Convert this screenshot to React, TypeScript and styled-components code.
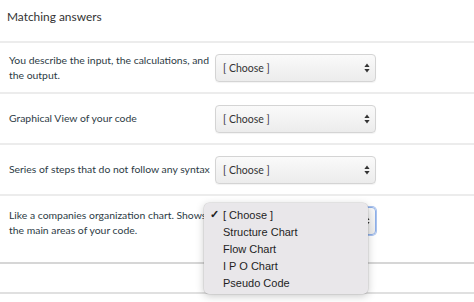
import React from "react";
import styled, { createGlobalStyle } from "styled-components";

const Global = createGlobalStyle`
  html, body { margin: 0; padding: 0; background: #fff; }
  body { font-family: Lato, "Open Sans", sans-serif; color: #2d3b45; }
`;

const Page = styled.div`
  width: 474px;
  height: 302px;
  overflow: hidden;
  position: relative;
`;

const Title = styled.div`
  height: 43px;
  padding-left: 7px;
  padding-top: 9px;
  box-sizing: border-box;
  font-size: 11.9px;
  color: #333;
  border-bottom: 2px solid #ececec;
`;

const Row = styled.div<{ $h: number; $top?: boolean; $last?: boolean }>`
  height: ${(p) => p.$h}px;
  box-sizing: border-box;
  display: flex;
  align-items: ${(p) => (p.$top ? "flex-start" : "center")};
  padding-top: ${(p) => (p.$top ? "11px" : "0")};
  border-bottom: ${(p) => (p.$last ? "none" : "2px solid #ececec")};
  padding-left: 9px;
`;

const Label = styled.div<{ $top?: boolean }>`
  flex: 0 0 206px;
  box-sizing: border-box;
  font-size: 10.4px;
  line-height: 15px;
  color: #2d3b45;
  padding-top: ${(p) => (p.$top ? "1px" : "0")};
`;

const SelectBox = styled.div<{ $focus?: boolean }>`
  width: 161px;
  height: 28px;
  box-sizing: border-box;
  border: 1px solid ${(p) => (p.$focus ? "#8fb0e8" : "#d4d4d4")};
  box-shadow: ${(p) => (p.$focus ? "0 0 0 1px #a9c2ee" : "0 1px 1px rgba(0,0,0,0.05)")};
  border-radius: 4px;
  background: linear-gradient(#fafafa, #ececec);
  display: flex;
  align-items: center;
  justify-content: space-between;
  padding: 0 5px 0 7px;
  font-size: 10.5px;
  color: #333;
`;

const Footer = styled.div`
  height: 32px;
  box-sizing: border-box;
  border-top: 2px solid #d6d6d6;
  border-bottom: 2px solid #e0e0e0;
`;

const Menu = styled.div`
  position: absolute;
  left: 204px;
  top: 203px;
  width: 164px;
  padding: 3px 0;
  background: #e9e7ea;
  border-radius: 5px;
  box-shadow: 0 2px 8px rgba(0,0,0,0.22), 0 0 0 0.5px rgba(0,0,0,0.12);
  font-family: "Liberation Sans", Arial, sans-serif;
  font-size: 11px;
  color: #1e1e1e;
`;

const Item = styled.div`
  height: 17px;
  display: flex;
  align-items: center;
  padding-left: 19px;
  position: relative;
`;

const Check = styled.span`
  position: absolute;
  left: 6px;
  font-size: 11px;
  font-weight: bold;
`;

const Arrows = () => (
  <svg width="6" height="10" viewBox="0 0 6 10">
    <path d="M3 0.5 L5.6 4 H0.4 Z" fill="#333" />
    <path d="M3 9.5 L5.6 6 H0.4 Z" fill="#333" />
  </svg>
);

const Select = ({ focus }: { focus?: boolean }) => (
  <SelectBox $focus={focus}>
    <span>[ Choose ]</span>
    <Arrows />
  </SelectBox>
);

const rows = [
  { text: "You describe the input, the calculations, and the output.", h: 51 },
  { text: "Graphical View of your code", h: 51 },
  { text: "Series of steps that do not follow any syntax", h: 51 },
];

export default function App() {
  return (
    <Page>
      <Global />
      <Title>Matching answers</Title>
      {rows.map((r) => (
        <Row key={r.text} $h={r.h}>
          <Label>{r.text}</Label>
          <Select />
        </Row>
      ))}
      <Row $h={66} $top $last>
        <Label $top>Like a companies organization chart. Shows the main areas of your code.</Label>
        <Select focus />
      </Row>
      <Footer />
      <Menu>
        <Item><Check>✓</Check>[ Choose ]</Item>
        <Item>Structure Chart</Item>
        <Item>Flow Chart</Item>
        <Item>I P O Chart</Item>
        <Item>Pseudo Code</Item>
      </Menu>
    </Page>
  );
}
